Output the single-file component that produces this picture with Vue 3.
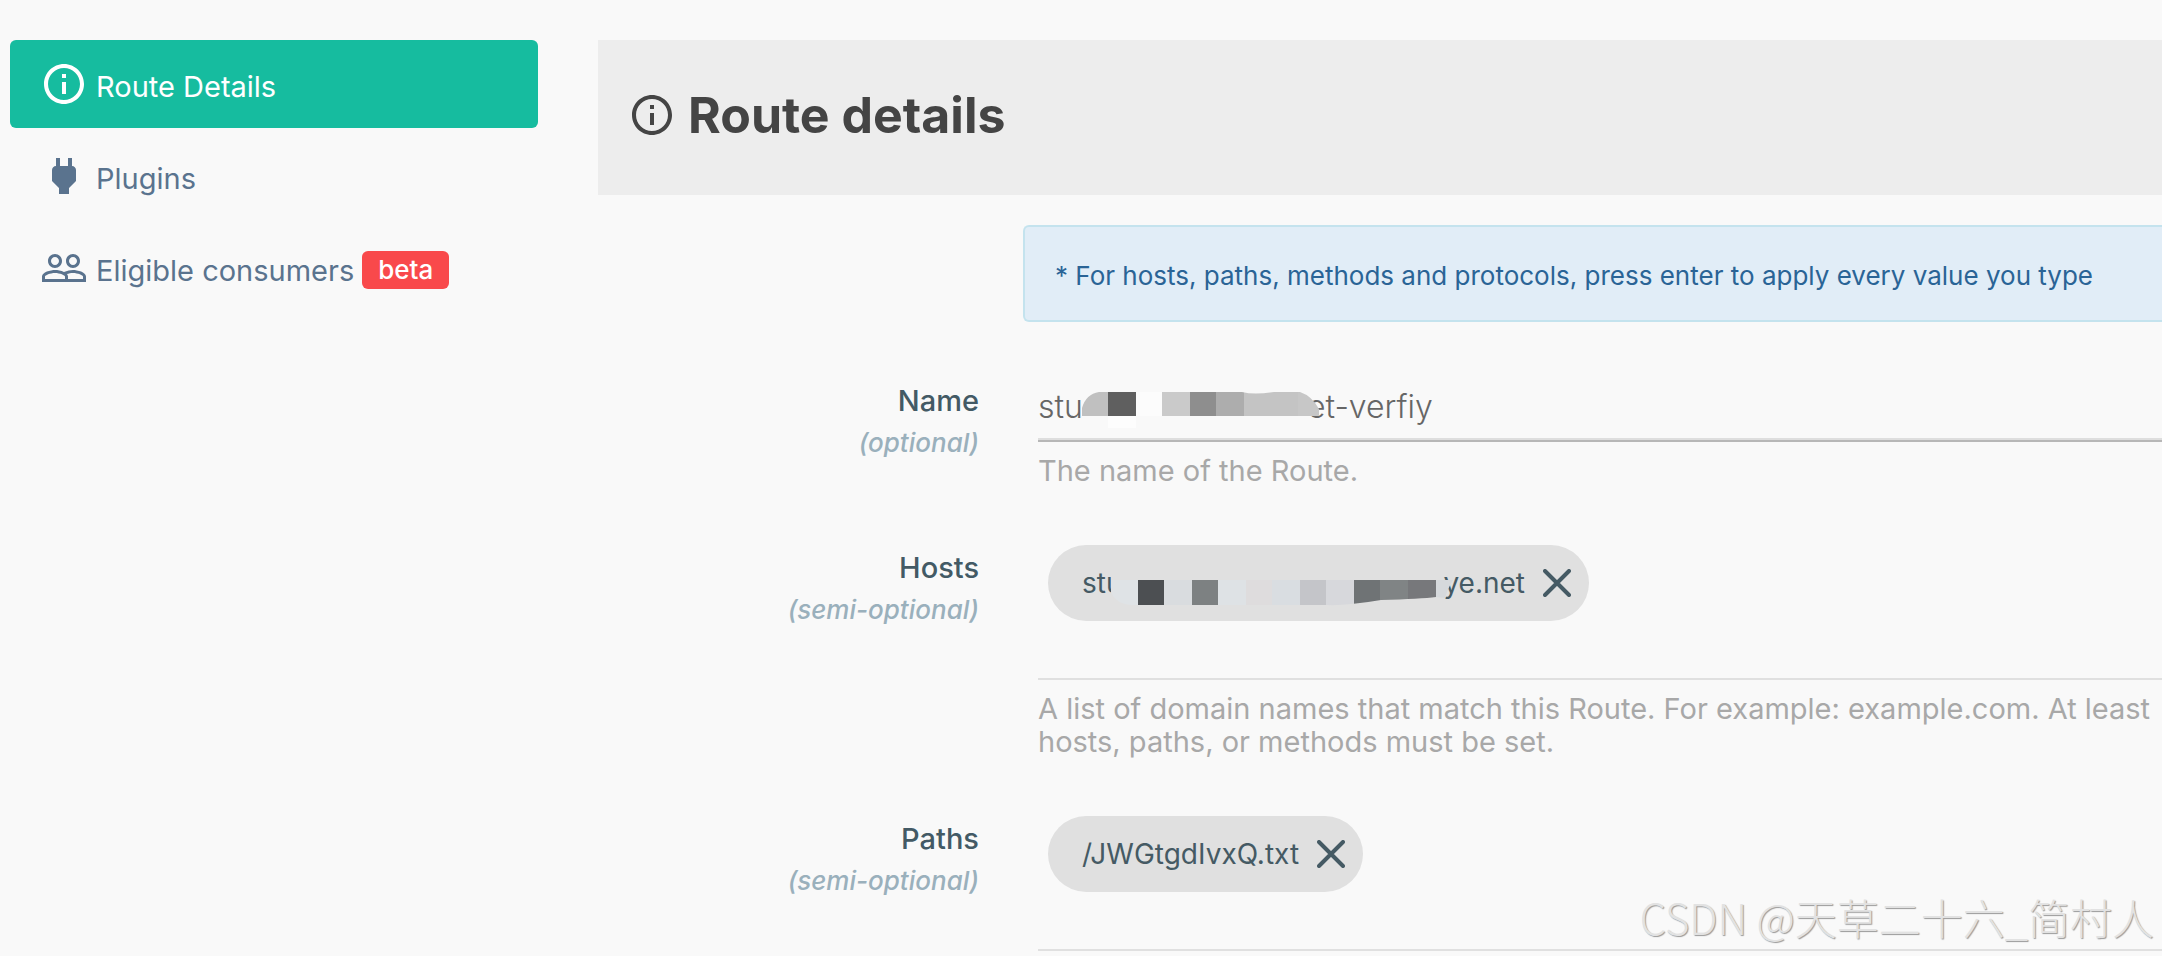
<script setup>
import { ref } from 'vue'

const name = ref('stu\u2003\u2003\u2003\u2003\u2003\u2003\u2003et-verfiy')
const paths = ref(['/JWGtgdIvxQ.txt'])

const hostBlocks = [
  [0, 27, '#dfe3e6'], [27, 26, '#4c4f52'], [53, 28, '#d9dcdf'], [81, 26, '#7d8182'],
  [107, 28, '#dee2e5'], [135, 26, '#dedcdd'], [161, 28, '#d9dde1'], [189, 26, '#c4c5c9'],
  [215, 28, '#d7d8dc'], [243, 26, '#6f7375'], [269, 28, '#808485'], [297, 28, '#77787b'],
  [325, 17, '#d6d9dc'],
]
const nameBlocks = [
  [0, 26, '#c0c0c0'], [26, 28, '#5f5f5f'], [54, 26, '#fcfcfc'], [80, 28, '#cacaca'],
  [108, 26, '#8e8e8e'], [134, 28, '#adadad'], [162, 54, '#c4c4c4'], [216, 21, '#c7c7c7'],
]
</script>

<template>
  <div class="page">
    <nav class="sidebar">
      <a href="#details" class="item active">
        <svg class="icon" viewBox="0 0 24 24"><path d="M11 7h2v2h-2zm0 4h2v6h-2zm1-9C6.48 2 2 6.48 2 12s4.48 10 10 10 10-4.48 10-10S17.52 2 12 2zm0 18c-4.41 0-8-3.59-8-8s3.59-8 8-8 8 3.59 8 8-3.59 8-8 8z" /></svg>
        <span>Route Details</span>
      </a>
      <a href="#plugins" class="item">
        <svg class="icon" viewBox="0 0 24 24"><path d="M16 7V3h-2v4h-4V3H8v4c-1.1 0-2 .9-2 2v5.5L9.5 18v3h5v-3l3.5-3.5V9c0-1.1-.9-2-2-2z" /></svg>
        <span>Plugins</span>
      </a>
      <a href="#consumers" class="item">
        <svg class="icon" viewBox="0 0 24 24"><path d="M16.5 13c-1.2 0-3.07.34-4.5 1-1.43-.67-3.3-1-4.5-1C5.33 13 1 14.08 1 16.25V19h22v-2.75c0-2.17-4.33-3.25-6.5-3.25zm-4 4.5h-10v-1.25c0-.54 2.56-1.75 5-1.75s5 1.21 5 1.75v1.25zm9 0H14v-1.25c0-.46-.2-.86-.52-1.22.88-.3 1.96-.53 3.02-.53 2.44 0 5 1.21 5 1.75v1.25zM7.5 12c1.93 0 3.5-1.57 3.5-3.5S9.43 5 7.5 5 4 6.57 4 8.5 5.57 12 7.5 12zm0-5.5c1.1 0 2 .9 2 2s-.9 2-2 2-2-.9-2-2 .9-2 2-2zm9 5.5c1.93 0 3.5-1.57 3.5-3.5S18.43 5 16.5 5 13 6.57 13 8.5s1.57 3.5 3.5 3.5zm0-5.5c1.1 0 2 .9 2 2s-.9 2-2 2-2-.9-2-2 .9-2 2-2z" /></svg>
        <span>Eligible consumers</span>
        <span class="badge">beta</span>
      </a>
    </nav>

    <main class="main">
      <header class="header">
        <svg class="icon" viewBox="0 0 24 24"><path d="M11 7h2v2h-2zm0 4h2v6h-2zm1-9C6.48 2 2 6.48 2 12s4.48 10 10 10 10-4.48 10-10S17.52 2 12 2zm0 18c-4.41 0-8-3.59-8-8s3.59-8 8-8 8 3.59 8 8-3.59 8-8 8z" /></svg>
        <h1>Route details</h1>
      </header>

      <p class="alert">* For hosts, paths, methods and protocols, press enter to apply every value you type</p>

      <form class="form" @submit.prevent>
        <div class="row">
          <label class="label" for="name">Name<em>(optional)</em></label>
          <div class="field">
            <input id="name" v-model="name" class="text" type="text" spellcheck="false" />
            <svg class="name-mask" width="237" height="36" viewBox="0 0 237 36">
              <clipPath id="nameClip"><path d="M0 24V16Q4 2 17 0H160Q172 3 192 0Q202-2 218 0Q230 4 237 17V24H54V36H26V24z" /></clipPath>
              <g clip-path="url(#nameClip)">
                <rect v-for="b in nameBlocks" :key="b[0]" :x="b[0]" y="0" :width="b[1]" height="24" :fill="b[2]" />
                <rect x="26" y="24" width="28" height="12" fill="#fdfdfd" />
              </g>
            </svg>
            <p class="help">The name of the Route.</p>
          </div>
        </div>

        <div class="row">
          <label class="label" for="hosts">Hosts<em>(semi-optional)</em></label>
          <div class="field">
            <div class="chips">
              <span class="chip">
                <span class="host"><span>stu</span><span>ye.net</span></span>
                <svg class="host-mask" width="342" height="34" viewBox="0 -8 342 34">
                  <clipPath id="hostClip"><path d="M0 0H342Q336 10 334 18L325 17Q310 19 270 20Q235 26 215 25H20Q5 24 0 12z" /></clipPath>
                  <rect x="0" y="-8" width="24" height="30" fill="#e0e0e0" />
                  <g clip-path="url(#hostClip)">
                    <rect v-for="b in hostBlocks" :key="b[0]" :x="b[0]" y="0" :width="b[1]" height="26" :fill="b[2]" />
                  </g>
                </svg>
                <button type="button" class="close" aria-label="Remove host">
                  <svg viewBox="0 0 28 28"><path d="M2 2L26 26M26 2L2 26" /></svg>
                </button>
              </span>
              <input id="hosts" class="entry" type="text" />
            </div>
            <p class="help">A list of domain names that match this Route. For example: example.com. At least<br />hosts, paths, or methods must be set.</p>
          </div>
        </div>

        <div class="row">
          <label class="label" for="paths">Paths<em>(semi-optional)</em></label>
          <div class="field">
            <div class="chips">
              <span v-for="p in paths" :key="p" class="chip">
                <span>{{ p }}</span>
                <button type="button" class="close" aria-label="Remove path">
                  <svg viewBox="0 0 28 28"><path d="M2 2L26 26M26 2L2 26" /></svg>
                </button>
              </span>
              <input id="paths" class="entry" type="text" />
            </div>
          </div>
        </div>
      </form>
    </main>
    <div class="watermark">CSDN @天草二十六_简村人</div>
  </div>
</template>

<style>
body { background: #f9f9f9; }
</style>

<style scoped>
* { box-sizing: border-box; }
.page {
  position: relative;
  display: flex;
  gap: 60px;
  min-height: 100vh;
  padding: 40px 0 0 10px;
  overflow: hidden;
  background: #f9f9f9;
  font-family: Inter, "Noto Sans", sans-serif;
  font-size: 29px;
  font-weight: 400;
}
.sidebar { flex: 0 0 528px; display: flex; flex-direction: column; gap: 4px; }
.item {
  display: flex;
  align-items: center;
  gap: 8px;
  height: 88px;
  padding: 0 30px;
  border-radius: 6px;
  color: #5a738e;
  text-decoration: none;
  white-space: nowrap;
}
.item span { margin-top: 4px; }
.item.active { background: #16bc9f; color: #fff; }
.icon { flex: none; width: 48px; height: 48px; fill: currentColor; }
.badge {
  padding: 0 16px;
  border-radius: 6px;
  background: #f9494b;
  color: #fff;
  font-size: 26px;
  font-weight: 500;
  line-height: 38px;
}
.main { flex: 1; min-width: 0; }
.header {
  display: flex;
  align-items: center;
  gap: 12px;
  height: 155px;
  padding: 0 30px 5px;
  background: #ededed;
  color: #444;
}
h1 { margin: 0; font-size: 50px; font-weight: 700; line-height: 60px; }
.alert {
  margin: 30px 0 0 425px;
  padding: 32px 30px 28px;
  border: 2px solid #c4e3ee;
  border-right: 0;
  border-radius: 6px 0 0 6px;
  background: #e1edf7;
  color: #2a6496;
  font-size: 26px;
  line-height: 33px;
  white-space: nowrap;
}
.form { padding-top: 54px; }
.row { display: grid; grid-template-columns: 381px 1fr; column-gap: 59px; }
.label {
  padding-top: 4px;
  color: #435a65;
  font-weight: 500;
  line-height: 42px;
  text-align: right;
}
.label em { display: block; color: #9ab0bc; font-size: 26px; font-weight: 500; }
.field { position: relative; min-width: 0; }
.text {
  display: block;
  width: 100%;
  height: 66px;
  padding: 0 0 4px;
  border: 0;
  border-bottom: 2px solid #b7b7b7;
  box-shadow: inset 0 -2px #dedede;
  background: transparent;
  color: #666;
  font: inherit;
  font-size: 32px;
  font-weight: 300;
  outline: 0;
}
.name-mask { position: absolute; left: 44px; top: 16px; }
.help { margin: 12px 0 56px; color: #a8a8a8; line-height: 33px; white-space: nowrap; }
.chips {
  display: flex;
  align-items: flex-start;
  height: 137px;
  padding: 2px 0 0 10px;
  border-bottom: 2px solid #e0e0e0;
}
.chip {
  position: relative;
  flex: none;
  display: flex;
  align-items: center;
  gap: 18px;
  height: 76px;
  padding: 0 18px 0 34px;
  border-radius: 38px;
  background: #e0e0e0;
  color: #455a64;
  font-size: 28px;
}
.host { display: flex; justify-content: space-between; width: 443px; }
.host-mask { position: absolute; left: 63px; top: 27px; }
.close { width: 28px; height: 28px; padding: 0; border: 0; background: none; }
.close svg { display: block; fill: none; stroke: #455a64; stroke-width: 4; stroke-linecap: round; }
.entry { flex: 1; min-width: 0; height: 76px; border: 0; background: transparent; font: inherit; outline: 0; }
.watermark {
  position: absolute;
  right: 8px;
  bottom: 9px;
  color: #e2e2e2;
  font: 300 42px/60px "Noto Sans CJK SC", sans-serif;
  text-shadow: 1px 1px 1px #999;
  white-space: nowrap;
  pointer-events: none;
}
</style>
